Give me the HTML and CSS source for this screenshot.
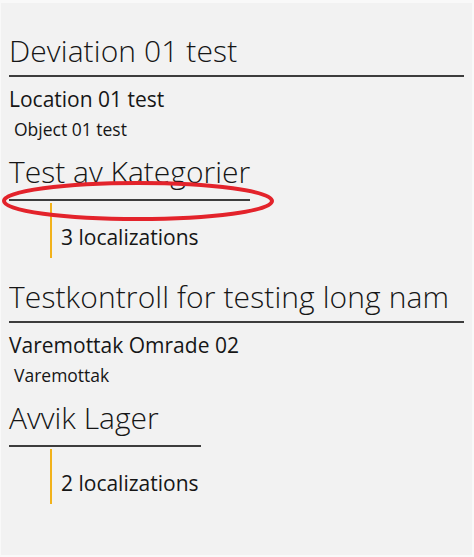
FILE: index.html
```html
<!DOCTYPE html>
<html lang="no">
<head>
<meta charset="utf-8">
<title>Deviations</title>
<link rel="stylesheet" href="styles.css">
</head>
<body>
<main class="panel">
  <section class="group">
    <h2 class="group-title">Deviation 01 test</h2>
    <div class="location">Location 01 test</div>
    <div class="object">Object 01 test</div>
    <h3 class="cat-title">Test av Kategorier</h3>
    <div class="count">3 localizations</div>
  </section>
  <section class="group">
    <h2 class="group-title">Testkontroll for testing long nam</h2>
    <div class="location">Varemottak Omrade 02</div>
    <div class="object">Varemottak</div>
    <h3 class="cat-title">Avvik Lager</h3>
    <div class="count">2 localizations</div>
  </section>
</main>
<svg class="annotation" width="280" height="50" viewBox="0 0 280 50" aria-hidden="true">
  <ellipse cx="138" cy="25" rx="134" ry="18" fill="none" stroke="#e3232b" stroke-width="4"/>
</svg>
</body>
</html>
```
FILE: styles.css
```css
html, body {
  margin: 0;
  padding: 0;
}
body {
  background: #f9f9f9;
  font-family: "Open Sans", "Noto Sans", sans-serif;
  color: #161616;
  width: 474px;
  height: 557px;
  overflow: hidden;
  position: relative;
}
.panel {
  margin: 3px 2px 2px 1px;
  height: 552px;
  box-sizing: border-box;
  background: #f2f2f2;
  padding: 0 8px;
  display: flex;
  flex-direction: column;
}
.group {
  display: flex;
  flex-direction: column;
  align-items: flex-start;
  padding-top: 28px;
}
.group + .group {
  padding-top: 19px;
}
.group-title {
  margin: 0;
  align-self: stretch;
  font-size: 30px;
  font-weight: 300;
  line-height: 40px;
  padding-bottom: 4px;
  border-bottom: 2px solid #3d3d3d;
  white-space: nowrap;
  overflow: hidden;
  letter-spacing: 0.1px;
}
.location {
  margin-top: 8px;
  font-size: 21px;
  line-height: 28px;
}
.object {
  margin-top: 5px;
  padding-left: 5px;
  font-size: 17.5px;
  line-height: 22px;
}
.cat-title {
  margin: 12px 0 0;
  min-width: 192px;
  font-size: 30px;
  font-weight: 300;
  line-height: 40px;
  padding-bottom: 7px;
  border-bottom: 2px solid #3d3d3d;
}
.count {
  margin: 2px 0 0 41px;
  padding: 20px 0 7px 9px;
  border-left: 2px solid #f2b21b;
  font-size: 21px;
  line-height: 28px;
}
.annotation {
  position: absolute;
  left: 0;
  top: 176px;
}
```
